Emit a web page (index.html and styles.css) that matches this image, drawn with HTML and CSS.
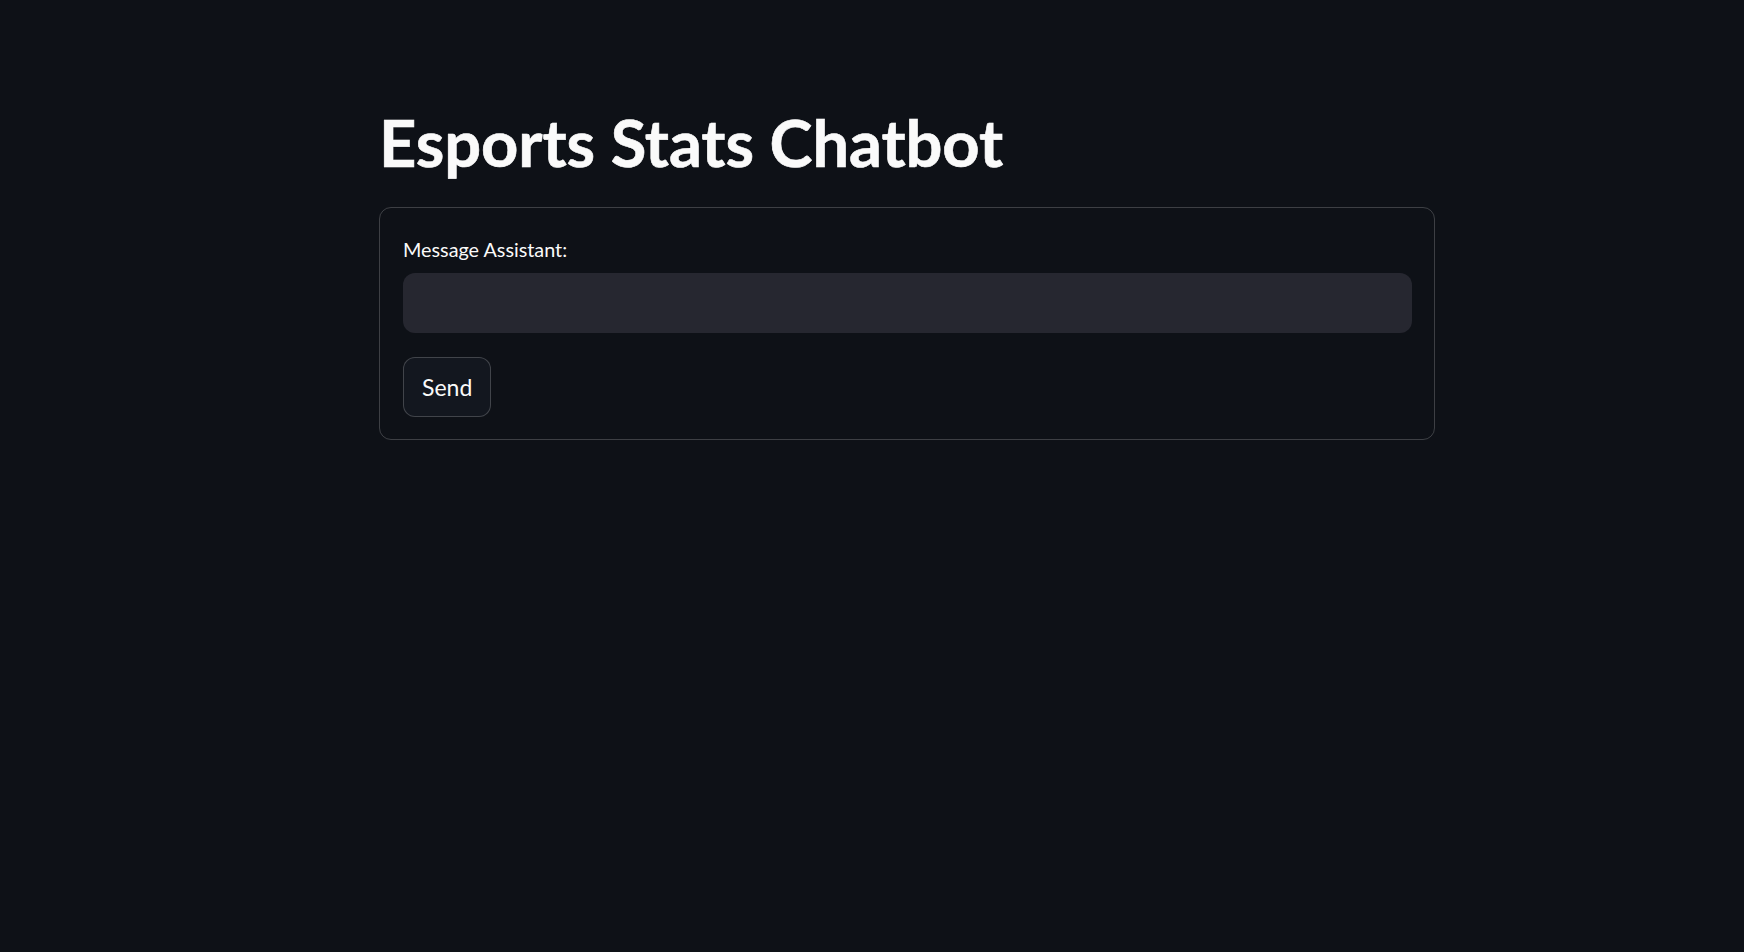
FILE: index.html
```html
<!DOCTYPE html>
<html>
<head>
<meta charset="utf-8">
<link rel="stylesheet" href="styles.css">
<title>Esports Stats Chatbot</title>
</head>
<body>
<div class="main">
  <h1 class="title">Esports Stats Chatbot</h1>
  <form class="form">
    <label class="label" for="msg">Message Assistant:</label>
    <input class="input" id="msg" type="text">
    <button class="btn" type="button">Send</button>
  </form>
</div>
</body>
</html>
```

FILE: styles.css
```css
html, body {
  margin: 0;
  padding: 0;
  background: #0e1117;
  height: 100%;
}
body {
  font-family: "Lato", "Noto Sans", sans-serif;
  color: #fafafa;
}
.main {
  width: 1056px;
  margin-left: 379px;
  padding-top: 102px;
}
.title {
  margin: 0 0 25px 0;
  font-size: 65px;
  line-height: 80px;
  font-weight: 700;
  letter-spacing: -0.1px;
  color: #fafafa;
  -webkit-text-stroke: 0.6px #fafafa;
}
.form {
  box-sizing: border-box;
  display: flex;
  flex-direction: column;
  align-items: flex-start;
  border: 1px solid rgba(250, 250, 250, 0.2);
  border-radius: 12px;
  padding: 26px 22px 22px 23px;
}
.label {
  font-size: 19.8px;
  line-height: 30px;
  color: #fafafa;
  margin-bottom: 9px;
}
.input {
  box-sizing: border-box;
  width: 100%;
  height: 60px;
  background: #262730;
  border: none;
  border-radius: 12px;
  outline: none;
  color: #fafafa;
  font-family: inherit;
  font-size: 21px;
  padding: 0 18px;
  margin-bottom: 24px;
}
.btn {
  box-sizing: border-box;
  height: 60px;
  padding: 0 18px;
  background: #13171f;
  border: 1px solid rgba(250, 250, 250, 0.2);
  border-radius: 12px;
  color: #fafafa;
  font-family: inherit;
  font-size: 23px;
  cursor: pointer;
}
```
